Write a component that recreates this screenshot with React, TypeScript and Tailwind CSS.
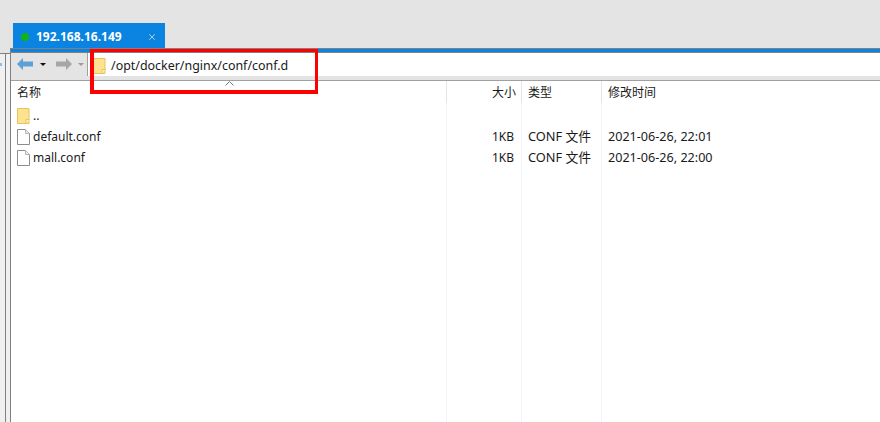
import { X } from 'lucide-react';

const FONT = { fontFamily: '"Noto Sans", "Noto Sans CJK SC", sans-serif' };

const FILES = [
  { name: 'default.conf', size: '1KB', type: 'CONF 文件', time: '2021-06-26, 22:01' },
  { name: 'mall.conf', size: '1KB', type: 'CONF 文件', time: '2021-06-26, 22:00' },
];

function FolderIcon() {
  return (
    <svg width="13" height="16" viewBox="0 0 13 16" className="shrink-0">
      <path d="M.5.5h11.5v15H.5z" fill="#fde38f" stroke="#e6c35c" />
      <path d="M9 15.5v-4h3.5" fill="#fff3c4" stroke="#e6c35c" />
    </svg>
  );
}

function FileIcon() {
  return (
    <svg width="13" height="16" viewBox="0 0 13 16" className="shrink-0">
      <path d="M.5.5h8l4 4v11H.5z" fill="#fff" stroke="#8d8d8d" />
      <path d="M8.5.5v4h4" fill="#eee" stroke="#b5b5b5" />
    </svg>
  );
}

function Arrow({ color, flip }: { color: string; flip?: boolean }) {
  return (
    <svg width="16" height="12" viewBox="0 0 16 12" className={flip ? 'scale-x-[-1]' : ''}>
      <path d="M0 6 6 0v3.5h10v5H6V12z" fill={color} />
    </svg>
  );
}

function Caret({ color }: { color: string }) {
  return (
    <svg width="6" height="3" viewBox="0 0 6 3">
      <path d="M0 0h6L3 3z" fill={color} />
    </svg>
  );
}

export default function App() {
  return (
    <div className="relative w-[880px] h-[422px] bg-white overflow-hidden flex flex-col text-[12px] text-[#1a1a1a]" style={FONT}>
      <div className="h-[48px] bg-[#e4e4e4] flex items-end pl-[13px] shrink-0">
        <div className="w-[152px] h-[25px] bg-[#0a84e0] text-white flex items-center pl-[8px] pt-[2px] relative">
          <span className="w-[8px] h-[8px] rounded-full bg-[#12b312] mr-[7px]" />
          <span className="font-bold text-[12px]">192.168.16.149</span>
          <X className="absolute left-[134px] top-[9px] w-[10px] h-[10px]" strokeWidth={1.5} />
        </div>
      </div>

      <div className="flex-1 flex min-h-0">
        <div className="w-[5px] flex flex-col shrink-0">
          <div className="h-[5px] bg-[#e4e4e4]" />
          <div className="flex-1 bg-[#f0f0f0] border-t border-[#808080]" />
        </div>
        <div className="w-[6px] flex flex-col shrink-0">
          <div className="h-[5px] bg-[#e4e4e4] border-r border-[#808080]" />
          <div className="flex-1 bg-[#f0f0f0] border-x border-t border-[#808080]" />
        </div>
        <div className="flex-1 flex flex-col min-w-0">
          <div className="h-[1px] bg-[#808080] shrink-0" />
          <div className="h-[3px] bg-[#0a84e0] shrink-0" />
          <div className="h-[1px] bg-[#808080] shrink-0" />
          <div className="h-[27px] bg-[#e4e4e4] flex shrink-0">
            <div className="w-[76px] flex items-center pl-[6px] pb-[5px] shrink-0">
              <Arrow color="#5f9fd8" />
              <span className="ml-[7px] flex"><Caret color="#111" /></span>
              <span className="ml-[10px] flex"><Arrow color="#a6a6a6" flip /></span>
              <span className="ml-[6px] flex"><Caret color="#9a9a9a" /></span>
            </div>
            <div className="flex-1 flex flex-col">
              <div className="h-[23px] bg-white border-l border-[#a0a0a0] flex items-center pl-[5px] pt-[3px]">
                <FolderIcon />
                <span className="ml-[5px] text-[12.45px]">/opt/docker/nginx/conf/conf.d</span>
              </div>
            </div>
          </div>
          <div className="h-[1px] bg-[#a0a0a0] shrink-0" />

          <div className="flex-1 flex flex-col relative">
            <div className="flex h-[22px] shrink-0 leading-[24px]">
              <div className="w-[436px] pl-[6px] border-r border-[#e5e5e5]">名称</div>
              <div className="w-[75px] pr-[5px] text-right border-r border-[#e5e5e5]">大小</div>
              <div className="w-[80px] pl-[6px] border-r border-[#e5e5e5]">类型</div>
              <div className="pl-[6px]">修改时间</div>
            </div>
            <svg className="absolute left-[214px] top-[0px]" width="9" height="5" viewBox="0 0 9 5">
              <path d="M.5 4.5 4.5.5l4 4" fill="none" stroke="#777777" />
            </svg>
            <div className="flex-1 flex">
              <div className="w-[436px] pl-[6px] pt-[2px] border-r border-[#f0f5fb] flex flex-col">
                <div className="h-[21px] flex items-center gap-[3px]"><FolderIcon /> ..</div>
                {FILES.map((f) => (
                  <div key={f.name} className="h-[21px] flex items-center gap-[3px]"><FileIcon /> {f.name}</div>
                ))}
              </div>
              <div className="w-[75px] pr-[7px] pt-[2px] text-right border-r border-[#f0f5fb] flex flex-col">
                <div className="h-[21px]" />
                {FILES.map((f) => <div key={f.name} className="h-[21px] leading-[21px]">{f.size}</div>)}
              </div>
              <div className="w-[80px] pl-[6px] pt-[2px] border-r border-[#f0f5fb] flex flex-col text-[12.8px]">
                <div className="h-[21px]" />
                {FILES.map((f) => <div key={f.name} className="h-[21px] leading-[21px]">{f.type}</div>)}
              </div>
              <div className="pl-[6px] pt-[2px] flex flex-col text-[12.6px]">
                <div className="h-[21px]" />
                {FILES.map((f) => <div key={f.name} className="h-[21px] leading-[21px]">{f.time}</div>)}
              </div>
            </div>
          </div>
        </div>
      </div>

      {/* cut-off arrow tip of the panel on the left */}
      <div className="absolute left-0 top-[63px] w-[2px] h-[3px] bg-[#8fbce6]" />
      {/* annotation over the screenshot */}
      <div className="absolute left-[90px] top-[49px] w-[228px] h-[45px] border-[3px] border-l-4 border-b-4 border-[#ff0000]" />
    </div>
  );
}
